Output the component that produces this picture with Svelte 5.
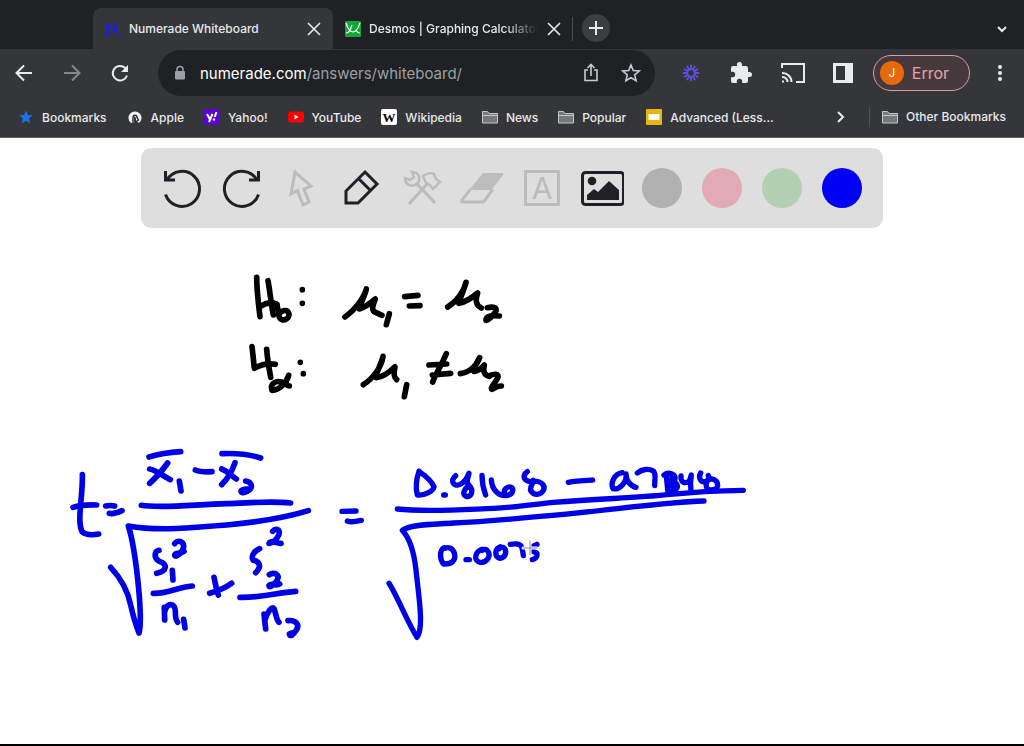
<script>
	const folder = 'M.5 2.500h5l1.500 2h8.500v9.500H.5z';

	const bookmarks = [
		{ title: 'Bookmarks', icon: 'star' },
		{ title: 'Apple', icon: 'apple' },
		{ title: 'Yahoo!', icon: 'yahoo' },
		{ title: 'YouTube', icon: 'youtube' },
		{ title: 'Wikipedia', icon: 'wiki' },
		{ title: 'News', icon: 'folder' },
		{ title: 'Popular', icon: 'folder' },
		{ title: 'Advanced (Less...', icon: 'slides' }
	];

	const colors = [
		{ name: 'Gray', value: '#b1b1b1' },
		{ name: 'Red', value: '#e2aab2' },
		{ name: 'Green', value: '#b4d0b3' },
		{ name: 'Blue', value: '#0000f5' }
	];

	let tool = $state('pen');
	let color = $state('Blue');

	// pen samples are stored at three times the canvas resolution
	const ink = [
		{
			label: 'H0: μ1 = μ2, Ha: μ1 ≠ μ2',
			x: 240,
			y: 260,
			color: '#000',
			width: 17,
			strokes: [
				'M50 52C50 90 55 130 60 170',
				'M84 62C90 95 93 130 100 165',
				'M60 140C75 130 92 124 110 132',
				'M111 134L118 172C125 187 150 178 147 162C143 146 125 150 117 162',
				'M187 89h0M187 130h0',
				'M315 171C345 150 371 115 379 87C375 108 361 128 358 147C376 142 393 128 406 117C400 132 394 148 402 155L426 166',
				'M448 161L439 194',
				'M494 110L534 106M508 138L540 137',
				'M623 141C650 125 672 95 678 67C674 88 660 110 657 130C675 126 698 112 713 99C707 116 704 134 724 144',
				'M742 143C762 138 774 145 766 156C758 168 745 180 738 181C738 164 765 166 778 168',
				'M36 260C39 285 41 305 43 325C62 314 85 309 106 313',
				'M80 268C82 295 87 325 92 352',
				'M125 366C103 360 90 374 96 391C115 392 140 370 146 346C137 362 134 376 148 378',
				'M181 307h0M190 341h0',
				'M370 374C400 355 425 320 429 289C424 312 408 335 409 353C428 350 450 335 465 320C461 338 460 352 470 359',
				'M500 374L493 410',
				'M567 315L620 312M577 345L632 340M619 281C605 315 585 345 578 366',
				'M661 341C690 337 712 315 719 293C711 308 699 322 702 334C714 332 726 324 733 315C729 330 730 345 748 349',
				'M748 347C770 338 781 345 770 359C760 375 750 386 756 388C764 384 771 377 784 378'
			]
		},
		{
			label: 't = (x̄1 − x̄2) / √(s1²/n1 + s2²/n2)',
			x: 60,
			y: 430,
			color: '#0000e6',
			width: 17,
			strokes: [
				'M67 134C69 200 50 270 66 305C78 316 100 315 116 312',
				'M39 232C60 225 85 224 110 225',
				'M137 228C147 226 155 226 164 228M148 250C160 253 175 247 186 242',
				'M267 81C300 71 330 67 362 65',
				'M269 117C290 120 310 140 331 149M323 99C308 120 288 143 269 160',
				'M358 153L363 183',
				'M406 120C418 125 438 126 456 125',
				'M486 71C530 69 568 73 602 84',
				'M485 117C500 122 514 137 529 147M525 98C517 122 505 145 485 164',
				'M557 153C575 156 579 170 568 180C558 188 545 191 543 184C546 177 556 178 562 177',
				'M244 226C300 236 400 224 500 221C570 219 630 212 692 219',
				'M152 412C185 447 203 480 212 525C221 565 230 592 237 609C246 575 237 480 230 420C223 365 216 320 205 288C300 305 400 292 500 285C600 276 680 262 745 242',
				'M297 361C282 364 281 384 298 394C323 402 323 422 290 430',
				'M344 341C353 328 371 334 371 350C369 369 349 382 344 376C345 365 362 373 372 364',
				'M337 421L339 450',
				'M280 490C320 492 350 472 397 468',
				'M313 532L314 570M314 545C322 516 345 518 346 543C346 560 347 571 353 577',
				'M371 568L375 594',
				'M462 442C466 460 469 478 475 495M449 490C470 484 496 474 515 460',
				'M599 356C576 366 574 383 580 391C604 396 603 413 587 428',
				'M638 304C646 294 661 296 657 314C649 330 636 341 627 340C633 327 650 342 663 340',
				'M628 434C643 424 660 435 652 450C643 465 628 475 627 467C633 456 647 470 659 462',
				'M540 502C600 504 650 488 707 484',
				'M612 552L617 597M614 572C622 545 636 528 642 536C648 550 648 568 657 577',
				'M684 572C708 569 720 585 709 600C700 614 690 622 688 612C694 607 700 609 704 606'
			]
		},
		{
			label: '= (0.8168 − 0.7848) / √(0.0075',
			x: 320,
			y: 450,
			color: '#0000e6',
			width: 16,
			strokes: [
				'M66 184L108 183M82 213C98 220 112 211 124 211',
				'M232 177C320 187 440 178 520 175C590 172 625 164 700 157C850 145 950 144 1040 134C1130 125 1200 122 1270 121',
				'M207 400C230 435 262 515 291 562C313 535 295 430 288 360C283 315 273 268 247 241C270 222 350 223 400 219C500 215 580 207 660 199C850 185 1000 158 1152 153',
				'M297 64C289 85 286 115 292 135C315 137 341 122 342 110C334 91 316 77 297 64',
				'M371 135H376',
				'M407 77C389 93 401 108 415 105C431 102 441 85 447 70C444 88 436 95 448 107C461 121 456 143 438 139C426 133 432 118 443 109',
				'M486 76C486 99 491 119 497 135',
				'M514 90C516 120 536 137 557 137C584 134 584 107 566 111C551 115 549 129 559 136',
				'M622 65C606 77 610 93 633 95C660 89 677 105 671 120C661 137 641 137 632 122C628 108 644 97 639 91',
				'M745 97C765 92 795 91 818 90',
				'M907 68C882 72 871 99 879 116C897 121 922 97 918 72C918 90 930 108 948 112',
				'M952 69C966 57 986 55 1000 63C1010 73 1003 92 1004 107',
				'M1032 75C1046 64 1070 73 1065 88C1060 99 1047 95 1041 91L1044 126C1067 127 1077 112 1069 101C1063 95 1052 98 1046 107M1039 78L1043 119M1056 82L1060 116',
				'M1083 78C1081 97 1095 103 1108 93L1114 75C1111 91 1111 108 1113 124',
				'M1142 69C1134 82 1141 98 1156 95C1176 78 1194 91 1193 108C1188 124 1163 123 1159 110C1154 94 1172 86 1165 77',
				'M373 293C357 301 359 330 371 342C395 343 409 332 403 309C397 293 384 290 374 295',
				'M438 329H448',
				'M486 298C465 306 459 332 481 337C502 339 513 317 504 304C499 296 491 298 487 301',
				'M541 290C523 297 523 321 540 325C558 323 562 301 551 293C545 290 540 292 538 296',
				'M571 283C587 280 602 282 605 291C608 300 609 309 610 317',
				'M651 283L637 290C628 303 643 304 651 310C653 319 647 327 637 329'
			]
		}
	];
</script>

<div class="browser">
	<header>
		<div class="tabs">
			<div class="tab active">
				<svg class="favicon" viewBox="0 0 16 16" fill="#2421bd">
					<path d="M0 2h4l4 6V2h4v10h-3L5 7v8H0z" /><circle cx="14.500" cy="13.500" r="1.500" />
				</svg>
				<span class="title">Numerade Whiteboard</span>
				<button aria-label="Close tab">
					<svg viewBox="0 0 16 16" class="line"><path d="M2 2l12 12M14 2L2 14" /></svg>
				</button>
			</div>
			<div class="tab">
				<svg class="favicon" viewBox="0 0 16 16">
					<rect width="16" height="16" rx="1" fill="#12a633" />
					<path d="M1 2c2 6 4 9 7 9s5-3 7-9M1 12c2 0 3-1 4-3l2-5M15 12c-2 0-3-1-4-3" fill="none" stroke="#fff" stroke-width="1.200" />
				</svg>
				<span class="title faded">Desmos | Graphing Calculator</span>
				<button aria-label="Close tab">
					<svg viewBox="0 0 16 16" class="line"><path d="M2 2l12 12M14 2L2 14" /></svg>
				</button>
			</div>
			<button class="new-tab" aria-label="New tab">
				<svg viewBox="0 0 16 16" class="line bold"><path d="M8 1v14M1 8h14" /></svg>
			</button>
			<button class="tab-search" aria-label="Search tabs">
				<svg viewBox="0 0 16 16" class="line bold"><path d="M4 6l4 4 4-4" /></svg>
			</button>
		</div>

		<div class="toolbar">
			<nav>
				<button aria-label="Back">
					<svg viewBox="0 0 20 20" class="line bold"><path d="M18 10H3M10 2.500L2.500 10l7.500 7.500" /></svg>
				</button>
				<button aria-label="Forward" class="dim">
					<svg viewBox="0 0 20 20" class="line bold"><path d="M2 10h15M10 2.500l7.500 7.500-7.500 7.500" /></svg>
				</button>
				<button aria-label="Reload">
					<svg viewBox="0 0 20 20" class="line bold">
						<path d="M17 12.500A7.300 7.300 0 1 1 15 4.800l2 2" />
						<path d="M18 2v7h-7z" fill="currentColor" stroke="none" />
					</svg>
				</button>
			</nav>
			<div class="omnibox">
				<svg class="lock" viewBox="0 0 12 16">
					<path d="M3 7V4.500a3 3 0 0 1 6 0V7" fill="none" stroke="#9aa0a6" stroke-width="1.500" />
					<rect x="1" y="6" width="10" height="8.500" rx="1" fill="#9aa0a6" />
				</svg>
				<a class="url" href="https://numerade.com/answers/whiteboard/">numerade.com<span>/answers/whiteboard/</span></a>
				<button aria-label="Share">
					<svg viewBox="0 0 20 20" class="line"><path d="M7 7H4v10.500h12V7h-3M10 13V2M6.500 5L10 1.500 13.500 5" /></svg>
				</button>
				<button aria-label="Bookmark this page">
					<svg viewBox="0 0 20 20" class="line"><path d="M10 2l2.300 5.500 6 .500-4.600 3.900 1.400 5.800L10 14.600l-5.100 3.100 1.400-5.800L1.700 8l6-.500z" /></svg>
				</button>
			</div>
			<div class="extensions">
				<button aria-label="Loom">
					<svg viewBox="0 0 20 20" stroke="#5d4fe0" stroke-width="1.800" fill="none" stroke-linecap="round">
						<circle cx="10" cy="10" r="3.800" />
						{#each Array(12) as _, i}
							<path d="M10 5.500V2.500" transform="rotate({i * 30} 10 10)" />
						{/each}
					</svg>
				</button>
				<button aria-label="Extensions">
					<svg class="big" viewBox="0 0 24 24" fill="currentColor">
						<path d="M20.500 11H19V7a2 2 0 0 0-2-2h-4V3.500a2.500 2.500 0 0 0-5 0V5H4a2 2 0 0 0-2 2v3.800h1.500a2.700 2.700 0 0 1 0 5.400H2V20a2 2 0 0 0 2 2h3.800v-1.500a2.700 2.700 0 0 1 5.400 0V22H17a2 2 0 0 0 2-2v-4h1.500a2.500 2.500 0 0 0 0-5z" />
					</svg>
				</button>
				<button aria-label="Cast">
					<svg class="big line bold" viewBox="0 0 24 24">
						<path d="M1 7V3h22v18h-8M1 20.500h2M1 16a5 5 0 0 1 5.500 5M1 12a9 9 0 0 1 9.500 9" />
					</svg>
				</button>
				<button aria-label="Side panel">
					<svg viewBox="0 0 20 20"><path d="M0 0h20v20H0zM3 3v14h9V3z" fill="currentColor" fill-rule="evenodd" /></svg>
				</button>
			</div>
			<button class="profile"><span class="avatar">J</span>Error</button>
			<button class="menu" aria-label="Menu">
				<svg viewBox="0 0 20 20" fill="currentColor">
					<circle cx="10" cy="4" r="2" /><circle cx="10" cy="10" r="2" /><circle cx="10" cy="16" r="2" />
				</svg>
			</button>
		</div>

		<div class="bookmarks">
			{#each bookmarks as b}
				<a href="#{b.icon}">
					<svg viewBox="0 0 16 16">
						{#if b.icon === 'star'}
							<path d="M8 1.500l1.900 4.400 4.800.400-3.600 3.200 1.100 4.700L8 11.700l-4.200 2.500 1.100-4.700-3.600-3.200 4.800-.400z" fill="#1a73e8" />
						{:else if b.icon === 'apple'}
							<path d="M4 14A6.500 6.500 0 1 1 12 14L9 11V9L7 7v7z" fill="#f1f3f4" />
							<path d="M6 14V8.500c0-3 4-3 4 0L11.500 11 10 12" fill="none" stroke="#35363a" stroke-width="1.500" />
						{:else if b.icon === 'yahoo'}
							<rect width="16" height="16" rx="1" fill="#5b03cf" />
							<path d="M3 5l2.800 5M8.500 5L5 13M12.500 3l-1.800 5" fill="none" stroke="#fff" stroke-width="2" />
							<circle cx="10" cy="10.500" r="1.200" fill="#fff" />
						{:else if b.icon === 'youtube'}
							<rect y="2.500" width="16" height="11" rx="3" fill="#f00" />
							<path d="M6.500 5.500v5l4-2.500z" fill="#fff" />
						{:else if b.icon === 'wiki'}
							<rect width="16" height="16" rx="2" fill="#fff" />
							<text x="8" y="13" text-anchor="middle" class="wiki">W</text>
						{:else if b.icon === 'slides'}
							<rect width="16" height="16" rx="1" fill="#e9b40f" />
							<rect x="2.500" y="5" width="11" height="6" fill="#fff" />
						{:else}
							<path d={folder} fill="#77787b" stroke="#c4c5c8" /><path d="M1 6.500h14" stroke="#c4c5c8" />
						{/if}
					</svg>
					{b.title}
				</a>
			{/each}
			<button aria-label="More bookmarks">
				<svg viewBox="0 0 16 16" class="line bold"><path d="M5 3l5 5-5 5" /></svg>
			</button>
			<a href="#other" class="other">
				<svg viewBox="0 0 16 16"><path d={folder} fill="#77787b" stroke="#c4c5c8" /><path d="M1 6.500h14" stroke="#c4c5c8" /></svg>
				Other Bookmarks
			</a>
		</div>
	</header>

	<main>
		<div class="tools">
			<button aria-label="Undo">
				<svg viewBox="0 0 44 44"><path d="M5.500 28.500A17.500 17.500 0 1 0 7 14M5.500 5v9H15" /></svg>
			</button>
			<button aria-label="Redo">
				<svg viewBox="0 0 44 44"><path d="M38.500 28.500A17.500 17.500 0 1 1 37 14M38.500 5v9H29" /></svg>
			</button>
			<button aria-label="Select" class:off={tool !== 'select'} onclick={() => (tool = 'select')}>
				<svg viewBox="0 0 44 44"><path d="M15 6l-4 22 6.500-3.500L23 39l6-3-5-13 7-3z" /></svg>
			</button>
			<button aria-label="Pen" class:off={tool !== 'pen'} onclick={() => (tool = 'pen')}>
				<svg viewBox="0 0 44 44"><path d="M25 6l12 12-19 19H6V25zM18.500 12.500l12 12" /></svg>
			</button>
			<button aria-label="Tools" class:off={tool !== 'tools'} onclick={() => (tool = 'tools')}>
				<svg viewBox="0 0 44 44">
					<path d="M9 38l19-21M17 18l18 19" />
					<path d="M5 12c0 6 5 9 10 7 5-2 6-9 1-12l-4-1 2 5-4 3z" stroke-width="2.500" />
					<path d="M23 10q6-4 11-2l2 5 4 3-7 7-3-4-4-2z" stroke-width="2.500" />
				</svg>
			</button>
			<button aria-label="Eraser" class:off={tool !== 'eraser'} onclick={() => (tool = 'eraser')}>
				<svg viewBox="0 0 44 44">
					<path d="M23 7h20q1 1 0 2L31 24H9z" fill="currentColor" stroke="none" />
					<path d="M10 24L2 34q-1 2 1 2h19q2 0 3-2l8-11" />
				</svg>
			</button>
			<button aria-label="Text" class:off={tool !== 'text'} onclick={() => (tool = 'text')}>
				<svg viewBox="0 0 44 44">
					<rect x="5.500" y="5.500" width="33" height="33" />
					<text x="22" y="33" text-anchor="middle" class="letter">A</text>
				</svg>
			</button>
			<button aria-label="Image">
				<svg viewBox="0 0 44 44">
					<rect x="2.500" y="6.500" width="41" height="32" rx="3" />
					<circle cx="12" cy="15" r="4.300" fill="currentColor" stroke="none" />
					<path d="M7 34v-5l7-6 4 3L29 15l10 9v10z" fill="currentColor" stroke="none" />
				</svg>
			</button>
			{#each colors as c}
				<button aria-label={c.name} aria-pressed={color === c.name} onclick={() => (color = c.name)}>
					<span class="swatch" style:background={c.value}></span>
				</button>
			{/each}
		</div>

		<svg class="canvas" viewBox="0 228 1024 516">
			{#each ink as group}
				<g
					role="img"
					aria-label={group.label}
					transform="translate({group.x} {group.y}) scale({1 / 3})"
					stroke={group.color}
					stroke-width={group.width}
				>
					{#each group.strokes as d}
						<path {d} />
					{/each}
				</g>
			{/each}
			<path d="M530 541v14M523 548h14" stroke="#fff" stroke-width="3" />
			<path d="M530 541v14M523 548h14" stroke="#8b8b9a" stroke-width="1" />
		</svg>
	</main>
</div>

<style>
	:global(body) {
		margin: 0;
		background: #fff;
	}
	.browser {
		min-height: 100vh;
		box-sizing: border-box;
		border-bottom: 2px solid #000;
		font-family: Inter, 'Liberation Sans', sans-serif;
		font-size: 12px;
		font-weight: 500;
		color: #e8eaed;
	}
	header {
		background: #35363a;
		border-bottom: 1px solid #5b5c60;
	}
	button {
		display: flex;
		align-items: center;
		justify-content: center;
		flex: none;
		padding: 0;
		border: 0;
		background: none;
		color: inherit;
		font: inherit;
	}
	a {
		color: inherit;
		text-decoration: none;
	}
	svg {
		display: block;
		flex: none;
	}
	.line {
		fill: none;
		stroke: currentColor;
		stroke-width: 1.6;
	}
	.bold {
		stroke-width: 2;
	}

	.tabs {
		display: flex;
		align-items: flex-end;
		height: 49px;
		padding: 0 14px 0 93px;
		background: #202124;
	}
	.tab {
		display: flex;
		align-items: center;
		gap: 8px;
		box-sizing: border-box;
		width: 240px;
		height: 41px;
		padding: 0 11px 0 12px;
		border-radius: 8px 8px 0 0;
	}
	.tab.active {
		background: #35363a;
	}
	.tab .favicon {
		width: 16px;
		height: 16px;
	}
	.tab .title {
		flex: 1;
		min-width: 0;
		overflow: hidden;
		white-space: nowrap;
	}
	.tab .faded {
		mask-image: linear-gradient(to right, #000 80%, transparent);
	}
	.tab button svg {
		width: 16px;
		height: 16px;
	}
	.tab + .tab {
		position: relative;
	}
	.tab + .tab::after {
		content: '';
		position: absolute;
		right: 0;
		height: 24px;
		border-right: 1px solid #4a4c50;
	}
	.new-tab {
		width: 28px;
		height: 28px;
		margin: 0 auto 7px 9px;
		border-radius: 50%;
		background: #3c3d41;
	}
	.new-tab svg,
	.tab-search svg {
		width: 16px;
	}
	.tab-search {
		height: 41px;
	}

	.toolbar {
		display: flex;
		align-items: center;
		gap: 18px;
		height: 48px;
		padding: 0 12px 0 10px;
	}
	.toolbar nav {
		display: flex;
		gap: 20px;
		margin-right: 6px;
	}
	.toolbar nav button {
		width: 28px;
		height: 28px;
	}
	.toolbar svg {
		width: 20px;
	}
	.dim {
		color: #85878b;
	}
	.omnibox {
		display: flex;
		align-items: center;
		flex: 1;
		gap: 20px;
		box-sizing: border-box;
		height: 46px;
		padding: 0 14px 0 16px;
		border-radius: 24px;
		background: #202124;
		color: #c7cacf;
	}
	.omnibox .lock {
		width: 12px;
	}
	.url {
		flex: 1;
		margin-left: -6px;
		color: #fff;
		font-size: 15px;
		font-weight: 400;
	}
	.url span {
		color: #9aa0a6;
	}
	.extensions {
		display: flex;
		align-items: center;
		gap: 28px;
		padding: 0 2px 0 8px;
	}
	.toolbar .big {
		width: 24px;
	}
	.profile {
		gap: 8px;
		box-sizing: border-box;
		width: 97px;
		height: 36px;
		padding-right: 14px;
		border: 1px solid #d9a0a4;
		border-radius: 18px;
		background: #46393d;
		color: #e6a3a6;
		font-size: 16px;
		font-weight: 400;
	}
	.avatar {
		width: 24px;
		border-radius: 50%;
		background: #e8680c;
		color: #fff;
		font-size: 12px;
		line-height: 24px;
	}
	.menu {
		width: 24px;
	}

	.bookmarks {
		display: flex;
		align-items: center;
		gap: 20px;
		height: 40px;
		padding: 0 18px;
		white-space: nowrap;
	}
	.bookmarks a {
		display: flex;
		align-items: center;
		gap: 8px;
	}
	.bookmarks svg {
		width: 16px;
	}
	.bookmarks button {
		margin-left: auto;
	}
	.bookmarks .other {
		padding-left: 12px;
		border-left: 1px solid #505256;
		line-height: 20px;
	}
	.wiki {
		font: bold 13px 'Liberation Serif', serif;
	}

	.tools {
		display: flex;
		align-items: center;
		width: max-content;
		height: 80px;
		margin: 10px auto 0;
		padding: 0 11px;
		border-radius: 10px;
		background: #dedede;
		color: #202124;
	}
	.tools button {
		width: 60px;
		height: 60px;
	}
	.tools svg {
		width: 44px;
		fill: none;
		stroke: currentColor;
		stroke-width: 3;
	}
	.tools .off {
		color: #bcbcbc;
	}
	.letter {
		font: 30px Inter, 'Liberation Sans', sans-serif;
		fill: currentColor;
		stroke: none;
	}
	.swatch {
		width: 40px;
		height: 40px;
		border-radius: 50%;
	}
	main {
		/* keeps the top margin of the tools inside the board */
		display: flow-root;
	}
	.canvas {
		width: 100%;
		fill: none;
		stroke-linecap: round;
		stroke-linejoin: round;
	}
</style>
